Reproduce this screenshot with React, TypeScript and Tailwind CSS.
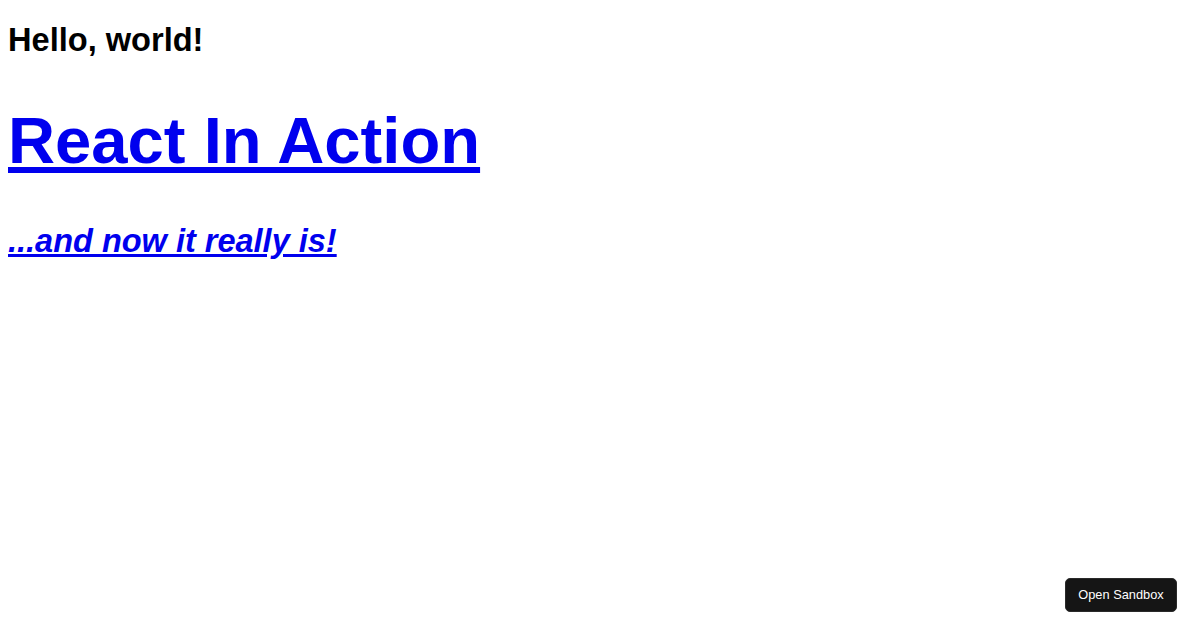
export default function App() {
  return (
    <div className="relative min-h-[630px] bg-white px-2 font-['Liberation_Sans',Arial,sans-serif] text-black">
      <h1 className="pt-[21px] text-[32.6px] font-bold leading-[37px]">Hello, world!</h1>

      <a href="#" className="mt-[46px] block w-fit text-[#0000ee] underline">
        <h1 className="text-[65.2px] font-bold leading-[74px]">React In Action</h1>
      </a>

      <a href="#" className="mt-[45px] block w-fit text-[#0000ee] underline">
        <h2 className="text-[32.5px] font-bold italic leading-[37px]">...and now it really is!</h2>
      </a>

      {/* Sandbox button */}
      <button className="absolute bottom-[18px] right-[23px] h-[34px] w-[112px] cursor-pointer rounded-[5px] border border-[#2a2a2a] bg-[#151515] text-[12.8px] text-white">
        Open Sandbox
      </button>
    </div>
  );
}
